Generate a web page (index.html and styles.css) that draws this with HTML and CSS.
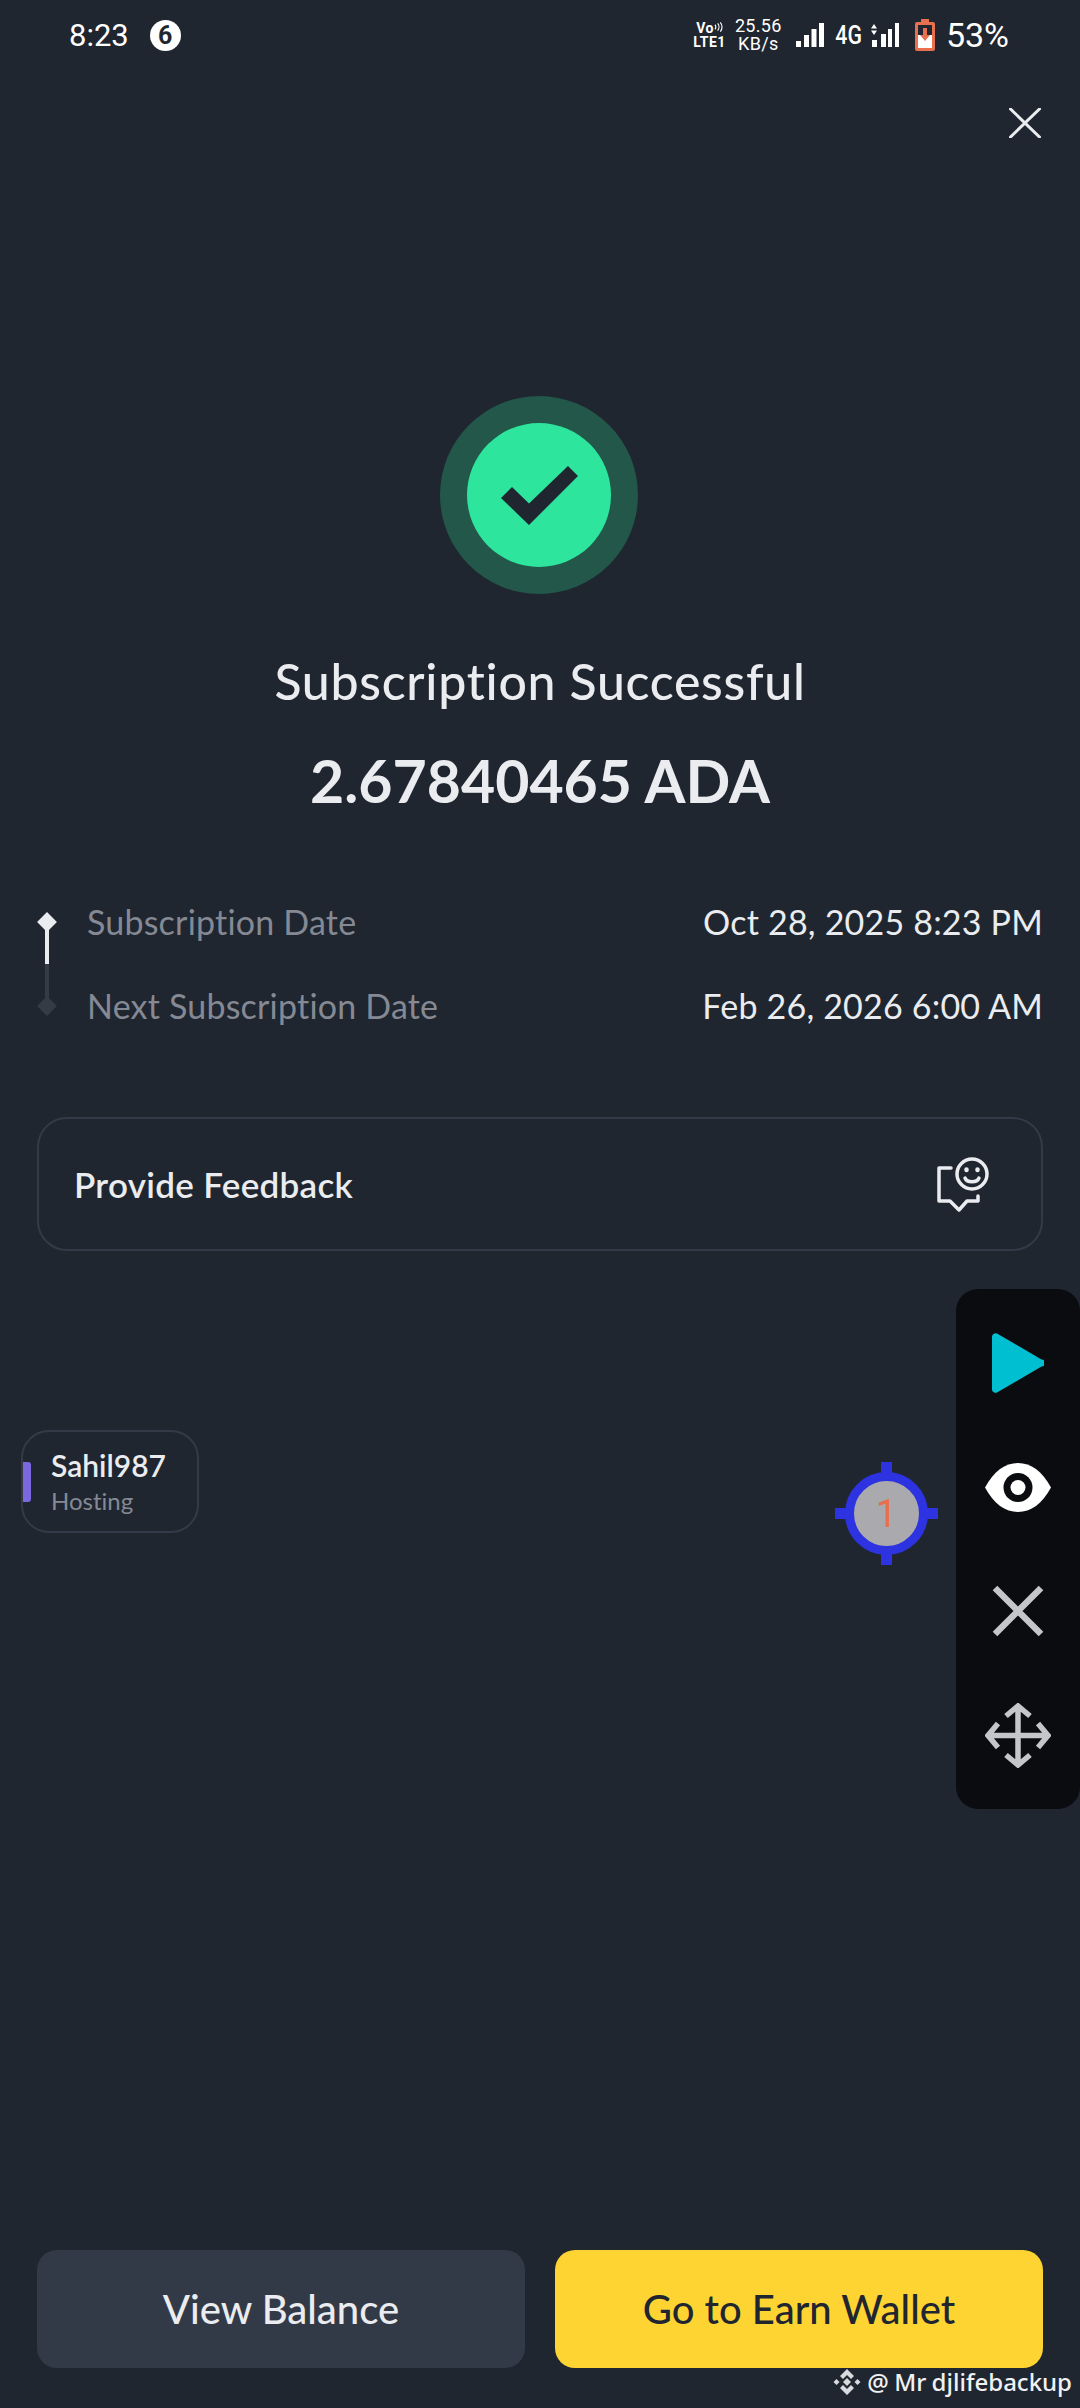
FILE: index.html
```html
<!DOCTYPE html>
<html lang="en">
<head>
  <meta charset="UTF-8" />
  <meta name="viewport" content="width=device-width, initial-scale=1.0" />
  <title>Subscription Successful</title>
  <link rel="stylesheet" href="styles.css">
</head>
<body>
  <div class="status-bar">
    <div class="status-left">
      <span class="clock">8:23</span>
      <span class="notif-badge">6</span>
    </div>
    <div class="status-right">
      <div class="volte"><div class="volte-line">Vo<svg class="volte-waves" viewBox="0 0 10 12"><path d="M1 3.500a3.500 3.500 0 0 1 0 5M4 2a6 6 0 0 1 0 8M7 .8a8 8 0 0 1 0 10.400" fill="none" stroke="#fff" stroke-width="1.300"/></svg></div><div class="volte-line">LTE1</div></div>
      <div class="net-speed"><div>25.56</div><div>KB/s</div></div>
      <svg class="signal" width="28" height="24" viewBox="0 0 28 24"><path d="M0 18h5v6H0zM8 12h5v12H8zM15.500 6h5v18h-5zM23 0h5v24h-5z" fill="#fff"/></svg>
      <span class="net-type">4G</span>
      <svg class="signal signal-data" width="28" height="24" viewBox="0 0 28 24"><path d="M0 5.500 3 1l3 4.500zM0 7.500h6L3 12zM1 17h5v7H1zM10 11h5v13h-5zM17 6h4v18h-4zM24 0h4v24h-4z" fill="#fff"/></svg>
      <svg class="battery" width="20" height="32" viewBox="0 0 20 32"><path d="M6 0h8v3h4a2 2 0 0 1 2 2v25a2 2 0 0 1-2 2H2a2 2 0 0 1-2-2V5a2 2 0 0 1 2-2h4z" fill="#e8704f"/><rect x="3" y="6" width="14" height="23" fill="#1f2630"/><rect x="3" y="16" width="14" height="13" fill="#fff"/><path d="M8 9h4v7l3 0-5 6-5-6 3 0z" fill="#e8704f"/></svg>
      <span class="battery-pct">53%</span>
    </div>
  </div>

  <div class="top-actions">
    <svg class="close-icon" width="32" height="30" viewBox="0 0 32 30"><path d="M1.500 1 30.500 29M30.500 1 1.500 29" fill="none" stroke="#eaecef" stroke-width="3" stroke-linecap="round"/></svg>
  </div>

  <main class="result">
    <div class="check-ring">
      <div class="check-disc">
        <svg width="77" height="59" viewBox="0 0 77 59"><path d="M0 32 11 21 28 37.500 67 0 77 10 28 59z" fill="#1f2630"/></svg>
      </div>
    </div>
    <h1 class="result-title">Subscription Successful</h1>
    <div class="result-amount">2.67840465 ADA</div>
  </main>

  <section class="timeline">
    <div class="timeline-row">
      <span class="marker marker-on"></span>
      <span class="timeline-label">Subscription Date</span>
      <span class="timeline-value">Oct 28, 2025 8:23 PM</span>
    </div>
    <div class="timeline-row">
      <span class="marker marker-off"></span>
      <span class="timeline-label">Next Subscription Date</span>
      <span class="timeline-value">Feb 26, 2026 6:00 AM</span>
    </div>
  </section>

  <div class="feedback-card">
    <span>Provide Feedback</span>
    <svg width="52" height="55" viewBox="0 0 52 55" fill="none" stroke="#eaecef" stroke-width="3.500" stroke-linecap="round" stroke-linejoin="round">
      <path d="M14 11H2v33h11l9 9 8-9h11v-5"/>
      <circle cx="35" cy="17" r="15"/>
      <path d="M28 21c2 5 12 5 14 0"/>
      <path d="M29.500 12.500v.5M40.500 12.500v.5" stroke-width="4.500"/>
    </svg>
  </div>

  <div class="bottom-actions">
    <button class="btn btn-dark">View Balance</button>
    <button class="btn btn-yellow">Go to Earn Wallet</button>
  </div>

  <!-- floating stuff on top of the page -->
  <div class="host-chip">
    <span class="host-bar"></span>
    <span class="host-name">Sahil987</span>
    <span class="host-role">Hosting</span>
  </div>

  <div class="target">
    <span class="target-num">1</span>
  </div>

  <aside class="float-panel">
    <svg width="52" height="62" viewBox="0 0 52 62"><path d="M5 1.500 49.500 27.500a3.500 3.500 0 0 1 0 7L5 60.500a3.500 3.500 0 0 1-5-3V4.500a3.500 3.500 0 0 1 5-3z" fill="#00bfd0"/></svg>
    <svg width="66" height="49" viewBox="0 0 66 49"><path d="M0 24.500C9 8 20 0 33 0s24 8 33 24.500C57 41 46 49 33 49S9 41 0 24.500z" fill="#fff"/><circle cx="33" cy="24.500" r="14.500" fill="#0b0c10"/><circle cx="33" cy="24.500" r="7.500" fill="#fff"/></svg>
    <svg width="52" height="52" viewBox="0 0 52 52"><path d="M3 3 49 49M49 3 3 49" stroke="#c4c6ca" stroke-width="6.500"/></svg>
    <svg width="66" height="65" viewBox="0 0 66 65" fill="none" stroke="#c4c6ca" stroke-width="5.500"><path d="M33 3v59M3 32.500h60M21 13 33 3l12 10M21 52l12 10 12-10M13 20.500 3 32.500l10 12M53 20.500l10 12-10 12"/></svg>
  </aside>

  <div class="watermark">
    <svg width="28" height="28" viewBox="0 0 28 28" fill="#d8dade"><path d="M14 1l7 7-3 3-4-4-4 4-3-3zM14 27l-7-7 3-3 4 4 4-4 3 3zM14 10l4 4-4 4-4-4zM3.500 11l3 3-3 3-3-3zM24.500 11l3 3-3 3-3-3z"/></svg>
    <span>@ Mr djlifebackup</span>
  </div>
</body>
</html>
```

FILE: styles.css
```css
* {
  box-sizing: border-box;
}

html, body {
  margin: 0;
  padding: 0;
}

body {
  position: relative;
  width: 1080px;
  height: 2408px;
  overflow: hidden;
  display: flex;
  flex-direction: column;
  background: #1f2630;
  color: #eaecef;
  font-family: 'Lato', sans-serif;
  font-variant-ligatures: none;
}

/* status bar */
.status-bar {
  display: flex;
  flex: none;
  justify-content: space-between;
  align-items: center;
  height: 70px;
  padding: 0 71px 0 69px;
  font-family: 'Roboto', sans-serif;
  color: #fff;
}

.status-left {
  display: flex;
  align-items: center;
  gap: 21px;
}

.clock {
  font-size: 31px;
}

.notif-badge {
  width: 31px;
  height: 31px;
  border-radius: 50%;
  background: #fff;
  color: #1f2630;
  font-size: 25px;
  font-weight: 700;
  line-height: 31px;
  text-align: center;
}

.status-right {
  display: flex;
  align-items: center;
}

.volte, .net-speed {
  display: flex;
  flex-direction: column;
  align-items: center;
}

.volte {
  font-size: 14px;
  font-weight: 700;
  letter-spacing: 0.5px;
}

.volte-line {
  height: 14px;
  line-height: 14px;
}

.volte-waves {
  width: 9px;
  height: 12px;
  vertical-align: top;
}

.net-speed {
  margin-left: 9px;
  font-size: 18px;
  line-height: 18px;
  letter-spacing: 0.3px;
}

.signal {
  margin-left: 14px;
}

.net-type {
  margin-left: 9px;
  font-size: 25px;
  font-weight: 500;
  transform: scaleX(0.85);
}

.signal-data {
  margin-left: 7px;
}

.battery {
  margin-left: 16px;
}

.battery-pct {
  margin-left: 11px;
  font-size: 34px;
}

/* close */
.top-actions {
  display: flex;
  justify-content: flex-end;
  padding: 38px 39px 0 0;
}

/* result */
.result {
  display: flex;
  flex-direction: column;
  align-items: center;
  margin-top: 258px;
}

.check-ring {
  display: flex;
  align-items: center;
  justify-content: center;
  width: 198px;
  height: 198px;
  margin-left: -2px;
  border-radius: 50%;
  background: #225749;
}

.check-disc {
  display: flex;
  align-items: center;
  justify-content: center;
  width: 144px;
  height: 144px;
  border-radius: 50%;
  background: #2ee59d;
}

.result-title {
  margin: 59px 0 0;
  font-size: 50px;
  font-weight: 500;
  line-height: 56px;
  letter-spacing: 0.7px;
}

.result-amount {
  margin-top: 37px;
  font-size: 59px;
  font-weight: 700;
  line-height: 70px;
}

/* dates */
.timeline {
  margin-top: 86px;
  padding: 0 37px;
  display: flex;
  flex-direction: column;
  gap: 44px;
}

.timeline-row {
  position: relative;
  display: flex;
  justify-content: space-between;
  padding-left: 50px;
  font-size: 34px;
  line-height: 40px;
  letter-spacing: 0.2px;
}

.timeline-label {
  color: #858994;
}

.marker {
  position: absolute;
  left: 3px;
  top: 13px;
  width: 14px;
  height: 14px;
  transform: rotate(45deg);
}

.marker-on {
  background: #eaecef;
}

.marker-off {
  background: #333b47;
}

.timeline-row:first-child::before {
  content: '';
  position: absolute;
  left: 8px;
  top: 20px;
  width: 4px;
  height: 80px;
  background: linear-gradient(#eaecef 0 42px, #333b47 42px);
}

/* feedback */
.feedback-card {
  display: flex;
  flex: none;
  justify-content: space-between;
  align-items: center;
  height: 134px;
  margin: 91px 37px 0;
  padding: 0 52px 0 35px;
  border: 2px solid #343a47;
  border-radius: 30px;
  font-size: 35px;
  font-weight: 600;
  letter-spacing: 0.3px;
}

/* buttons */
.bottom-actions {
  display: flex;
  gap: 30px;
  margin-top: auto;
  padding: 0 37px 40px;
}

.btn {
  flex: 1;
  height: 118px;
  border: none;
  border-radius: 20px;
  font-family: inherit;
  font-size: 40px;
  font-weight: 500;
  font-variant-ligatures: none;
}

.btn-dark {
  background: #333a47;
  color: #eaecef;
}

.btn-yellow {
  background: #fdd432;
  color: #1f2630;
}

/* overlays */
.host-chip {
  position: absolute;
  left: 21px;
  top: 1430px;
  width: 178px;
  height: 103px;
  padding: 16px 0 0 28px;
  border: 2px solid #343a47;
  border-radius: 28px;
  display: flex;
  flex-direction: column;
}

.host-bar {
  position: absolute;
  left: 0;
  top: 30px;
  width: 8px;
  height: 40px;
  background: #7b67e0;
  border-radius: 0 3px 3px 0;
}

.host-name {
  font-size: 30px;
  font-weight: 600;
  line-height: 34px;
}

.host-role {
  margin-top: 4px;
  font-size: 24px;
  line-height: 30px;
  color: #858994;
}

.target {
  position: absolute;
  left: 845px;
  top: 1472px;
  width: 83px;
  height: 83px;
  display: flex;
  align-items: center;
  justify-content: center;
  border: 9px solid #2d33e0;
  border-radius: 50%;
  background: #a9a9ae;
}

.target::before, .target::after {
  content: '';
  position: absolute;
}

.target::before {
  left: 27px;
  top: -19px;
  width: 11px;
  height: 103px;
  background: linear-gradient(#2d33e0 0 12px, transparent 12px 91px, #2d33e0 91px);
}

.target::after {
  left: -19px;
  top: 27px;
  width: 103px;
  height: 11px;
  background: linear-gradient(90deg, #2d33e0 0 12px, transparent 12px 91px, #2d33e0 91px);
}

.target-num {
  font-family: 'Roboto', sans-serif;
  font-size: 38px;
  color: #e8704f;
}

.float-panel {
  position: absolute;
  left: 956px;
  top: 1289px;
  width: 124px;
  height: 520px;
  padding-top: 12px;
  display: grid;
  grid-auto-rows: 124px;
  justify-items: center;
  align-items: center;
  background: #0b0c10;
  border-radius: 22px;
}

.watermark {
  position: absolute;
  right: 8px;
  top: 2366px;
  display: flex;
  align-items: center;
  gap: 6px;
  font-family: 'Noto Sans', sans-serif;
  font-size: 24px;
  font-weight: 500;
  line-height: 32px;
  word-spacing: -1px;
  color: #f0f1f3;
}
```
